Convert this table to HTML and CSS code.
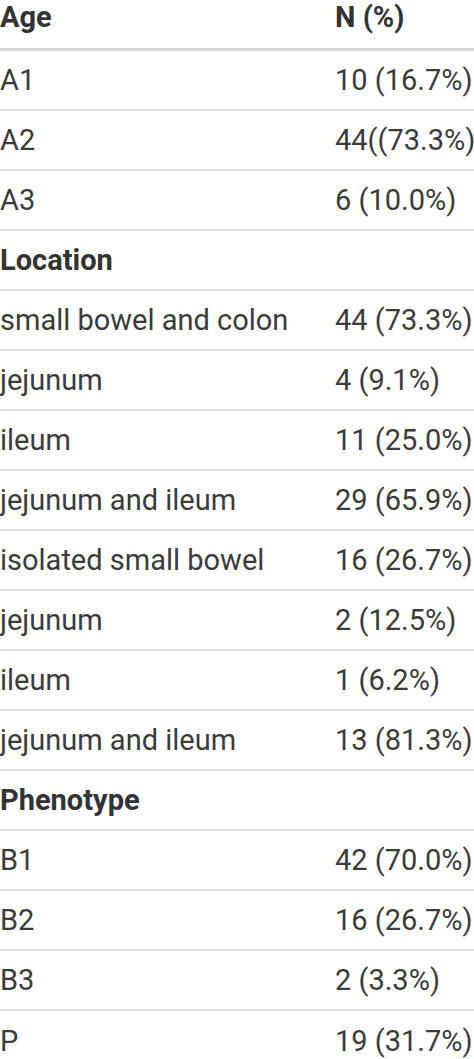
FILE: index.html
```html
<!DOCTYPE html>
<html>
<head>
<meta charset="utf-8">
<link rel="stylesheet" href="styles.css">
</head>
<body>
<div class="table">
  <div class="row head"><div class="c1">Age</div><div class="c2">N (%)</div></div>
  <div class="row"><div class="c1">A1</div><div class="c2">10 (16.7%)</div></div>
  <div class="row"><div class="c1">A2</div><div class="c2">44((73.3%)</div></div>
  <div class="row"><div class="c1">A3</div><div class="c2">6 (10.0%)</div></div>
  <div class="row section"><div class="c1">Location</div><div class="c2"></div></div>
  <div class="row"><div class="c1">small bowel and colon</div><div class="c2">44 (73.3%)</div></div>
  <div class="row"><div class="c1">jejunum</div><div class="c2">4 (9.1%)</div></div>
  <div class="row"><div class="c1">ileum</div><div class="c2">11 (25.0%)</div></div>
  <div class="row"><div class="c1">jejunum and ileum</div><div class="c2">29 (65.9%)</div></div>
  <div class="row"><div class="c1">isolated small bowel</div><div class="c2">16 (26.7%)</div></div>
  <div class="row"><div class="c1">jejunum</div><div class="c2">2 (12.5%)</div></div>
  <div class="row"><div class="c1">ileum</div><div class="c2">1 (6.2%)</div></div>
  <div class="row"><div class="c1">jejunum and ileum</div><div class="c2">13 (81.3%)</div></div>
  <div class="row section"><div class="c1">Phenotype</div><div class="c2"></div></div>
  <div class="row"><div class="c1">B1</div><div class="c2">42 (70.0%)</div></div>
  <div class="row"><div class="c1">B2</div><div class="c2">16 (26.7%)</div></div>
  <div class="row"><div class="c1">B3</div><div class="c2">2 (3.3%)</div></div>
  <div class="row last"><div class="c1">P</div><div class="c2">19 (31.7%)</div></div>
</div>
</body>
</html>
```
FILE: styles.css
```css
html, body {
  margin: 0;
  padding: 0;
  background: #fff;
}
body {
  font-family: Roboto, "Liberation Sans", sans-serif;
  font-size: 29px;
  color: #3b3b3b;
  overflow: hidden;
}
.table {
  display: flex;
  flex-direction: column;
  width: 474px;
}
.row {
  display: grid;
  grid-template-columns: 335px 1fr;
  align-items: center;
  height: 60px;
  box-sizing: border-box;
  border-bottom: 2px solid #dcdcdc;
  line-height: 34px;
  white-space: nowrap;
}
.row.head {
  height: 51px;
  border-bottom: 3px solid #d6d6d6;
  padding-bottom: 16px;
  font-weight: bold;
  color: #333;
}
.row.section {
  font-weight: bold;
  color: #333;
}
.row.last {
  border-bottom: none;
}
```
